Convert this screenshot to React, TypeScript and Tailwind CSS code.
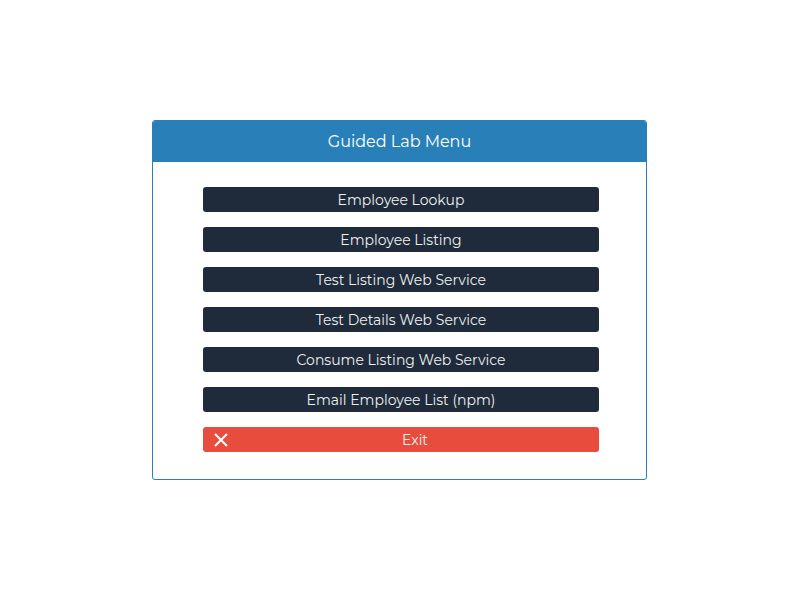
import React from "react";

const items = [
  "Employee Lookup",
  "Employee Listing",
  "Test Listing Web Service",
  "Test Details Web Service",
  "Consume Listing Web Service",
  "Email Employee List (npm)",
];

export default function App() {
  return (
    <div
      className="w-[800px] h-[600px] bg-white pt-[120px] pl-[152px]"
      style={{ fontFamily: "Montserrat, 'Open Sans', 'Noto Sans', sans-serif" }}
    >
      <div className="w-[495px] h-[360px] border border-[#2980b9] rounded-[3px] overflow-hidden flex flex-col">
        <div className="h-[41px] bg-[#2980b9] flex items-center justify-center text-white text-[16px]">
          Guided Lab Menu
        </div>
        <div className="flex flex-col gap-[15px] pt-[25px] pl-[50px]">
          {items.map((t) => (
            <button
              key={t}
              className="w-[396px] h-[25px] bg-[#1f2b3a] rounded-[3px] text-[#ecf0f1] text-[14px] flex items-center justify-center leading-none"
            >
              {t}
            </button>
          ))}
          <button className="relative w-[396px] h-[25px] bg-[#e74c3c] rounded-[3px] text-[#ecf0f1] text-[14px] flex items-center justify-center leading-none pl-[28px]">
            <svg
              className="absolute left-[11px] top-[6px]"
              width="14"
              height="14"
              viewBox="0 0 14 14"
              stroke="white"
              strokeWidth="2"
              fill="none"
            >
              <path d="M1 1L13 13M13 1L1 13" />
            </svg>
            Exit
          </button>
        </div>
      </div>
    </div>
  );
}
